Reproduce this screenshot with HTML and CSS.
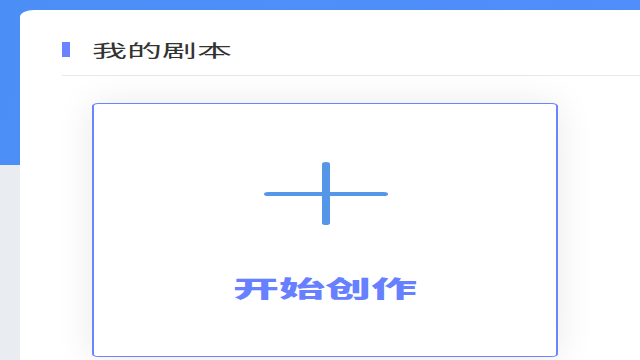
FILE: index.html
```html
<!DOCTYPE html>
<html lang="zh-CN">
<head>
<meta charset="utf-8">
<title>我的剧本</title>
<link rel="stylesheet" href="styles.css">
</head>
<body>
<div class="stage">
  <div class="panel">
    <div class="panel-head">
      <span class="marker"></span>
      <h1 class="title">我的剧本</h1>
    </div>
    <div class="panel-body">
      <div class="create-card">
        <div class="plus">
          <span class="plus-h"></span>
          <span class="plus-v"></span>
        </div>
        <div class="create-label">开始创作</div>
      </div>
    </div>
  </div>
</div>
</body>
</html>
```

FILE: styles.css
```css
html, body {
  margin: 0;
  padding: 0;
  width: 640px;
  height: 360px;
  overflow: hidden;
  background: #e9edf2;
}

.stage {
  width: 320px;
  height: 360px;
  transform: scaleX(2);
  transform-origin: 0 0;
  background:
    linear-gradient(to bottom, transparent 165px, #e9edf2 165px),
    linear-gradient(100deg, #4b8ff6 0%, #4e8ef9 50%, #528cfb 100%);
  padding: 10px 0 0 10px;
  box-sizing: border-box;
  overflow: hidden;
  font-family: "Noto Sans CJK SC", "Noto Sans", sans-serif;
}

.panel {
  height: 350px;
  background: #ffffff;
  border-radius: 7px 0 0 0;
  padding-left: 20.5px;
  box-sizing: border-box;
}

.panel-head {
  display: flex;
  align-items: center;
  height: 66px;
  padding-top: 22px;
  padding-bottom: 8px;
  box-sizing: border-box;
  border-bottom: 1px solid #e9e9ec;
}

.marker {
  width: 4px;
  height: 15px;
  background: #6b83ff;
  margin-right: 11.5px;
}

.title {
  margin: 0;
  font-size: 17.5px;
  line-height: 36px;
  font-weight: 400;
  color: #333333;
}

.panel-body {
  padding-top: 27px;
  padding-left: 15.5px;
}

.create-card {
  width: 233px;
  height: 254px;
  box-sizing: border-box;
  border: 1px solid #6b84ff;
  border-radius: 3px;
  background: #ffffff;
  box-shadow: 0 2px 28px rgba(0, 0, 0, 0.09);
  display: flex;
  flex-direction: column;
  align-items: center;
  padding-top: 58px;
}

.plus {
  position: relative;
  width: 62px;
  height: 63px;
}

.plus-h {
  position: absolute;
  left: 0;
  right: 0;
  top: 29.5px;
  height: 4px;
  border-radius: 2px;
  background: #5596e8;
}

.plus-v {
  position: absolute;
  top: 0;
  bottom: 0;
  left: 29px;
  width: 4.5px;
  border-radius: 2px;
  background: #5596e8;
}

.create-label {
  margin-top: 47px;
  font-size: 23px;
  line-height: 30px;
  font-weight: 900;
  color: #6680ff;
}
```
